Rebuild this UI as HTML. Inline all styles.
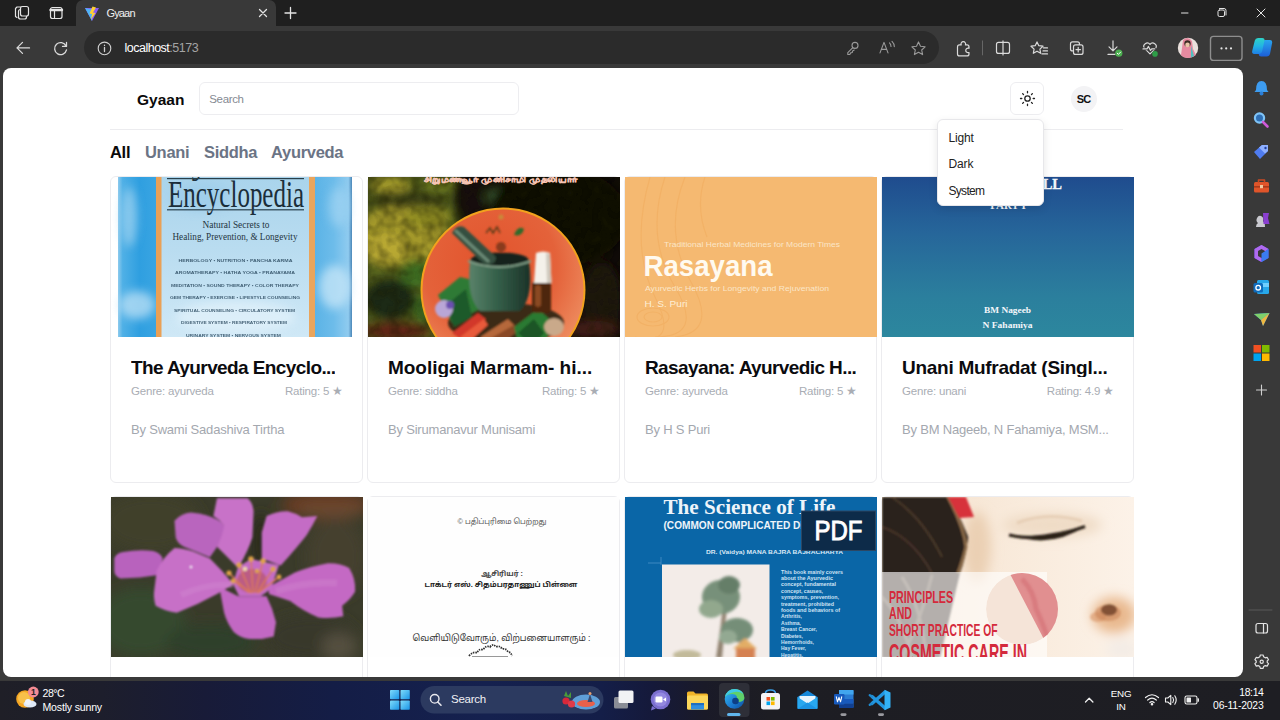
<!DOCTYPE html>
<html lang="en">
<head>
<meta charset="utf-8">
<title>Gyaan</title>
<style>
*{box-sizing:border-box;margin:0;padding:0}
html,body{width:1280px;height:720px;overflow:hidden;background:#1f1f1f;font-family:"Liberation Sans",sans-serif}
.abs{position:absolute}
#root{position:relative;width:1280px;height:720px;overflow:hidden;background:#393939}
/* ---------- browser chrome ---------- */
#tabstrip{left:0;top:0;width:1280px;height:26.300px;background:#1f1f1f}
#tab{left:76px;top:0;width:200px;height:27px;background:#393939;border-radius:7px 7px 0 0}
#tabtitle{left:106.500px;top:7px;font-size:11px;color:#f0f0f0;letter-spacing:-.85px}
#toolbar{left:0;top:26px;width:1280px;height:43px;background:#393939}
#addr{left:84px;top:30.500px;width:855px;height:33.500px;border-radius:17px;background:#2b2b2b}
#url{left:124.500px;top:41px;font-size:12.500px;color:#fff;letter-spacing:-.5px}
#url span{color:#a4a4a4}
#sidebar{left:1243px;top:68px;width:37px;height:612px;background:#393939}
/* ---------- page ---------- */
#page{left:3px;top:68.400px;width:1240px;height:609px;background:#fff;border-radius:8px;overflow:hidden}
#page .in{position:absolute;left:-3px;top:-68.400px;width:1280px;height:720px}
#brand{left:137px;top:91.400px;font-size:15.500px;font-weight:700;color:#0a0a0a;letter-spacing:0}
#search{left:199px;top:82px;width:320px;height:33px;border:1px solid #ededf0;border-radius:6px}
#search span{position:absolute;left:9.300px;top:9.500px;font-size:11.500px;color:#858a92;letter-spacing:-.35px}
#hr{left:110px;top:129px;width:1013px;height:1px;background:#ececef}
#themebtn{left:1010px;top:82px;width:34px;height:33px;border:1px solid #ededf0;border-radius:6px;background:#fff}
#avatar{left:1071px;top:86px;width:26px;height:26px;border-radius:13px;background:#f3f3f5;font-size:11px;font-weight:700;color:#111;text-align:center;line-height:26px;letter-spacing:-1px;text-indent:-1px}
.tabs{top:143px;font-size:16.5px;font-weight:700;color:#6b7485;letter-spacing:-.3px}
#menu{left:937px;top:118.500px;width:107px;height:87.700px;background:#fff;border:1px solid #e7e7ea;border-radius:6px;box-shadow:0 3px 8px rgba(0,0,0,.10)}
#menu div{position:absolute;left:10.500px;font-size:12px;color:#222;letter-spacing:-.15px}
/* ---------- cards ---------- */
.card{width:253px;height:307px;border:1px solid #ececef;border-radius:6px;background:#fff}
.card .img{position:absolute;left:0;top:0;width:252px;height:160px;overflow:hidden}
.card .img svg{position:absolute;left:0;top:0}
.card h3{position:absolute;left:20px;top:180px;height:19.500px;line-height:21.800px;overflow:hidden;font-size:19px;font-weight:700;color:#0b0b0f;white-space:nowrap;letter-spacing:-.6px}
.card .g{position:absolute;left:20px;top:207.300px;line-height:14px;font-size:11.5px;color:#a9adb4;letter-spacing:-.2px}
.card .r{position:absolute;right:19px;top:207.300px;line-height:14px;font-size:11.5px;color:#a9adb4;letter-spacing:-.2px}
.card .by{position:absolute;left:20px;top:245px;font-size:13px;color:#a4a8af;white-space:nowrap;letter-spacing:-.2px}
/* ---------- taskbar ---------- */
#taskbar{left:0;top:680.500px;width:1280px;height:40px;background:linear-gradient(90deg,#1f1f27 0%,#1d1e2c 8%,#181b38 16%,#141d46 26%,#15214f 38%,#141e48 47%,#15193a 51%,#1a1a28 55%,#1d1d23 60%,#1e1e23 100%)}
#gap{left:0;top:677px;width:1280px;height:4px;background:#393939}
.tb{color:#fff;font-size:11.5px;letter-spacing:-.2px}
</style>
</head>
<body>
<div id="root">
  <div class="abs" id="tabstrip"></div>
  <div class="abs" id="tab"></div>
  <div class="abs" id="tabtitle">Gyaan</div>
  <div class="abs" id="toolbar"></div>
  <div class="abs" id="addr"></div>
  <div class="abs" id="url">localhost<span>:5173</span></div>
  <!--CHROME-ICONS--><svg class="abs" style="left:0;top:0" width="1280" height="70" viewBox="0 0 1280 70" fill="none" stroke="#e4e4e4" stroke-width="1.200" stroke-linecap="round" stroke-linejoin="round">
<!-- workspaces -->
<rect x="18.500" y="9.500" width="8" height="9.500" rx="2" /><path d="M17 17.500 l-1.500 -1 v-8 l1.500 -1.500 h6"/><rect x="20.500" y="6.500" width="8" height="9.500" rx="2" fill="#1f1f1f"/>
<!-- tab actions -->
<rect x="50.500" y="7.500" width="11.500" height="11" rx="2"/><path d="M50.500 10 h11.500" stroke-width="2.400"/><path d="M54.500 11 v7.500"/>
<!-- vite favicon -->
<g stroke="none" transform="translate(0 1.500)"><path d="M85 6.500 L99 6.500 L92 19.500 Z" fill="#8a5cf6"/><path d="M85 6.500 L92 8 L92 19.500 Z" fill="#4fb4f7"/><path d="M92.500 5 L96 6 L93 11 L95.500 11.500 L91 18 L92 12.500 L89.500 12 Z" fill="#ffcf33"/></g>
<!-- tab close, new tab -->
<path d="M259.500 9.500 l7 7 M266.500 9.500 l-7 7" stroke-width="1.300"/>
<path d="M290.500 7.500 v11 M285 13 h11" stroke-width="1.300"/>
<!-- window controls -->
<path d="M1181.500 13 h6.500" stroke-width="1"/>
<rect x="1218" y="10" width="6.500" height="6.500" rx="1.500" stroke-width="1"/><path d="M1219.500 8.500 h4.500 q2 0 2 2 v4.500" stroke-width="1"/>
<path d="M1257 9 l8 8 M1265 9 l-8 8" stroke-width="1"/>
<g transform="translate(0 0.900)" stroke="#dadada"><!-- back, refresh -->
<path d="M17 47 h12.500 M22.500 41.500 l-5.500 5.500 l5.500 5.500" stroke-width="1.300"/>
<path d="M66 45 a6 6 0 1 0 .5 4 M66.500 41.500 v4 h-4" stroke-width="1.300"/>
<!-- info -->
<circle cx="104.500" cy="47.500" r="6.300" stroke="#d0d0d0" stroke-width="1.100"/><path d="M104.500 46.500 v4.200 M104.500 44.200 v.3" stroke="#d0d0d0" stroke-width="1.300"/>
<!-- key, read aloud, star (dim) -->
<g stroke="#9a9a9a" stroke-width="1.100" transform="translate(0.500 0)"><circle cx="854.500" cy="44.500" r="3"/><path d="M852.300 46.800 l-5 5 v1.800 h2 l.8 -1.600 l1.600 -.4 l.4 -1.600 l1.600 -.8"/>
<path d="M879.500 52 l4 -10.500 l4 10.500 M881 48.500 h5 M889 42 q1.500 1.500 1.500 3.500 M891.500 40.500 q2.300 2.200 2.300 5.200"/>
<path d="M918 41 l2 4.300 l4.600 .6 l-3.400 3.200 l.9 4.600 l-4.100 -2.300 l-4.100 2.300 l.9 -4.600 l-3.400 -3.200 l4.600 -.6 z"/></g>
<!-- extensions -->
<path d="M957.500 46 q0 -2 2 -2 h1.700 a2.300 2.300 0 1 1 4.200 0 h1.600 q2 0 2 2 v1.400 a2.300 2.300 0 1 0 0 4.200 v1.400 q0 2 -2 2 h-7.500 q-2 0 -2 -2 z"/>
<path d="M982.500 40 v14" stroke="#666" stroke-width="1"/>
<!-- split screen -->
<rect x="996.500" y="41.500" width="13" height="11" rx="2"/><path d="M1003 40 v14"/>
<!-- favorites -->
<path d="M1037 41 l1.800 3.800 l4.200 .5 l-3.100 2.900 l.8 4.200 l-3.700 -2.100 l-3.700 2.100 l.8 -4.200 l-3.100 -2.900 l4.200 -.5 z M1043.500 47 h4 M1043 50 h4.500 M1042 53 h5.500"/>
<!-- collections -->
<rect x="1070.500" y="41" width="9" height="9" rx="2"/><rect x="1073.500" y="44" width="9.500" height="9.500" rx="2" fill="#393939"/><path d="M1078.200 46.500 v4.500 M1076 48.700 h4.500"/>
<!-- downloads -->
<path d="M1113 40 v9.500 M1109 46 l4 4 l4 -4 M1108 53.500 h7"/><circle cx="1118.800" cy="52.300" r="3.600" fill="#4caf50" stroke="none"/><path d="M1117.200 52.300 l1.200 1.200 l2.200 -2.300" stroke="#fff" stroke-width="1"/>
<!-- performance heart -->
<path d="M1150 53 l-5.500 -5.500 a3.300 3.300 0 0 1 5.500 -4 a3.300 3.300 0 0 1 5.500 4 z"/><path d="M1143 48 h4 l1.500 -2.500 l2 4 l1.200 -1.500 h3" stroke="#393939" stroke-width="2.600"/><path d="M1143 48 h4 l1.500 -2.500 l2 4 l1.200 -1.500 h3"/><circle cx="1155" cy="53" r="2.800" fill="#2e9d48" stroke="none"/>
<!-- profile avatar -->
<g stroke="none"><circle cx="1188" cy="47" r="10.200" fill="#e9e0dc"/><path d="M1183 39 q5 -4 9 1 l1 8 l3 6 q-4 3.500 -8 3.200 q-5 -.5 -7 -3.200 l1 -7z" fill="#e58aa0"/><circle cx="1187.500" cy="42.500" r="3.200" fill="#3a2a22"/><circle cx="1187.500" cy="44" r="2.300" fill="#e8c4a8"/><path d="M1191 45 l3 10 l-3 1.500z" fill="#4fc0c0"/></g>
<!-- more button -->
<rect x="1210.500" y="35.500" width="31.500" height="24" rx="3" stroke="#8e8e8e" stroke-width="1.400"/><g fill="#e4e4e4" stroke="none"><circle cx="1221.500" cy="47.500" r="1.100"/><circle cx="1226.200" cy="47.500" r="1.100"/><circle cx="1231" cy="47.500" r="1.100"/></g>
<!-- copilot -->
<defs><linearGradient id="cpa" x1="0" y1="0" x2="0" y2="1"><stop offset="0" stop-color="#2fd3c6"/><stop offset=".5" stop-color="#22b5e2"/><stop offset="1" stop-color="#1f7fe6"/></linearGradient><linearGradient id="cpb" x1="0" y1="0" x2="0" y2="1"><stop offset="0" stop-color="#2aa5ee"/><stop offset="1" stop-color="#1c5fd8"/></linearGradient></defs>
<g stroke="none"><path d="M1261.500 41.500 q.6 -2.500 3.200 -2.500 h5 q3 0 2.400 3 l-2 10.500 q-.6 3 -3.600 3 h-5.500 q-2.700 0 -2 -2.800z" fill="url(#cpb)"/><path d="M1254.800 39.500 q.6 -2.500 3.200 -2.500 h4.200 q2.800 0 2.200 2.800 l-2.200 10.400 q-.6 2.800 -3.400 2.800 h-4.600 q-2.700 0 -2 -2.800z" fill="url(#cpa)"/></g>
</g></svg><!--/CHROME-ICONS-->
  <div class="abs" id="sidebar"></div>
  <!--SIDEBAR-ICONS--><svg class="abs" style="left:1243px;top:68px" width="37" height="612" viewBox="1243 68 37 612" fill="none" stroke-linecap="round" stroke-linejoin="round">
<!-- bell -->
<path d="M1256 90 q0 -9 5.500 -9 q5.500 0 5.500 9 l1.500 2 h-14z" fill="#3d9cf0"/><circle cx="1261.500" cy="93.500" r="2" fill="#2b7fd8"/>
<!-- search -->
<circle cx="1259.500" cy="118" r="4.600" stroke="#7fc4f8" stroke-width="2.200" fill="#2f6fb5"/><path d="M1263 122 l4.500 4.500" stroke="#d05ad8" stroke-width="2.600"/>
<!-- tag -->
<path d="M1254 152 l8 -7 h6 v6 l-8 8z" fill="#4f7cf0"/><path d="M1262 145 h6 v6 l-3 2.500 l-6 -6z" fill="#8fb0ff"/><circle cx="1265.500" cy="148" r="1.200" fill="#1f3f9f"/>
<!-- toolbox -->
<rect x="1254" y="182" width="15" height="10.500" rx="1.500" fill="#e0552a"/><path d="M1258.500 182 v-2 h6 v2" stroke="#c84a24" stroke-width="1.600"/><rect x="1254" y="186" width="15" height="1.600" fill="#a83a1c"/><rect x="1260" y="185" width="3" height="3.200" fill="#f0c9a0"/>
<!-- chess -->
<path d="M1256 227 q0 -3 2 -4 q-2.500 -2 -1 -5 q1.500 -3 4 -2 q3 1 2 5 q2 2 2 6z" fill="#c9c9cf"/><path d="M1263 213 h6 l-1 5 l1.500 6 h-6z" fill="#8a3fd0"/>
<!-- m365 -->
<path d="M1261.500 245 l7 4 v9 l-7 4 l-7 -4 v-9z" fill="#6a4fe8"/><path d="M1261.500 245 l7 4 l-7 4.500 v8.500 l-7 -4 v-9z" fill="#b06af0"/><path d="M1258 251 l3.500 -2 l3.500 2 v5 l-3.500 2 l-3.500 -2z" fill="#393939"/><path d="M1261.500 253.500 l7 -4.500 v9 l-7 4z" fill="#3a7cf0"/>
<!-- outlook -->
<rect x="1257" y="280" width="12" height="14" rx="1.500" fill="#28a8ea"/><rect x="1261" y="283" width="8" height="4" fill="#6fd0ff"/><rect x="1253.500" y="283" width="9.500" height="9.500" rx="1.500" fill="#0f6cbd"/><circle cx="1258.200" cy="287.700" r="2.300" stroke="#fff" stroke-width="1.300"/>
<!-- paper plane -->
<path d="M1254 314 l15.500 -1 l-6.500 13 l-2 -6z" fill="#3a9be8"/><path d="M1254 314 l15.500 -1 l-8.500 7z" fill="#7fd06a"/><path d="M1261 320 l8.500 -7 l-6.500 13z" fill="#f0b840"/>
<!-- ms squares -->
<rect x="1253.500" y="345" width="7.500" height="7.500" fill="#f25022"/><rect x="1262" y="345" width="7.500" height="7.500" fill="#7fba00"/><rect x="1253.500" y="353.500" width="7.500" height="7.500" fill="#00a4ef"/><rect x="1262" y="353.500" width="7.500" height="7.500" fill="#ffb900"/>
<!-- plus -->
<path d="M1261.500 385 v10 M1256.500 390 h10" stroke="#d0d0d0" stroke-width="1.100"/>
<!-- divider, panel toggle, gear -->
<path d="M1249 610 h23" stroke="#5a5a5a" stroke-width="1"/>
<rect x="1256" y="623.500" width="11.500" height="9.500" rx="2" stroke="#e4e4e4" stroke-width="1.200"/><path d="M1263.500 623.500 v9.500" stroke="#e4e4e4" stroke-width="1.200"/>
<g stroke="#e4e4e4" stroke-width="1.200"><circle cx="1261.700" cy="661.700" r="1.600"/><path d="M1260.300 655 h2.800 l.5 1.800 l1.700 1 l1.800 -.5 l1.400 2.400 l-1.300 1.300 v1.400 l1.300 1.300 l-1.400 2.400 l-1.800 -.5 l-1.700 1 l-.5 1.800 h-2.800 l-.5 -1.800 l-1.700 -1 l-1.800 .5 l-1.400 -2.400 l1.300 -1.300 v-1.400 l-1.300 -1.300 l1.400 -2.400 l1.800 .5 l1.700 -1z"/></g>
</svg><!--/SIDEBAR-ICONS-->
  <div class="abs" id="gap"></div>
  <div class="abs" id="page"><div class="in">
    <div class="abs" id="brand">Gyaan</div>
    <div class="abs" id="search"><span>Search</span></div>
    <div class="abs" id="themebtn"><svg class="abs" style="left:8px;top:7px" width="17" height="17" viewBox="0 0 17 17" fill="none" stroke="#222" stroke-width="1.300" stroke-linecap="round"><circle cx="8.500" cy="8.500" r="2.700"/><path d="M8.500 1.500v1.300M8.500 14.200v1.300M1.500 8.500h1.300M14.200 8.500h1.300M3.600 3.600l.9.900M12.500 12.500l.9.900M3.600 13.400l.9-.9M12.500 4.500l.9-.9"/></svg></div>
    <div class="abs" id="avatar">SC</div>
    <div class="abs" id="hr"></div>
    <div class="abs tabs" style="left:110px;color:#0a0a0a">All</div>
    <div class="abs tabs" style="left:145px">Unani</div>
    <div class="abs tabs" style="left:204px">Siddha</div>
    <div class="abs tabs" style="left:271px">Ayurveda</div>

    <div class="abs card" style="left:110px;top:176px">
      <div class="img" id="im1"><svg width="251" height="160" viewBox="0 0 251 160">
<defs>
<linearGradient id="s1" x1="0" x2="1" y1="0" y2="0"><stop offset="0" stop-color="#8ecbee"/><stop offset=".12" stop-color="#4fb0e6"/><stop offset=".55" stop-color="#2f9fe0"/><stop offset="1" stop-color="#3aa5e2"/></linearGradient>
<linearGradient id="s1r" x1="0" x2="1" y1="0" y2="0"><stop offset="0" stop-color="#5bb3e6"/><stop offset=".5" stop-color="#6dbcea"/><stop offset=".9" stop-color="#8fcbef"/><stop offset="1" stop-color="#4a86b8"/></linearGradient>
<linearGradient id="s1c" x1="0" x2="0" y1="0" y2="1"><stop offset="0" stop-color="#a9d4ec"/><stop offset=".45" stop-color="#b9dcf0"/><stop offset="1" stop-color="#cfe8f6"/></linearGradient>
<filter id="b1" x="-30%" y="-30%" width="160%" height="160%"><feGaussianBlur stdDeviation="5"/></filter>
</defs>
<rect x="7" y="0" width="39" height="160" fill="url(#s1)"/>
<rect x="204" y="0" width="37" height="160" fill="url(#s1r)"/>
<rect x="50" y="0" width="149" height="160" fill="url(#s1c)"/>
<g filter="url(#b1)" opacity=".75"><ellipse cx="26" cy="128" rx="18" ry="14" fill="#bfe2f6"/><ellipse cx="18" cy="40" rx="8" ry="30" fill="#9dd2f0"/><ellipse cx="224" cy="110" rx="16" ry="22" fill="#c9e7f8"/><ellipse cx="228" cy="30" rx="10" ry="20" fill="#9fd3f2"/><ellipse cx="125" cy="140" rx="60" ry="16" fill="#e2f2fb"/><ellipse cx="90" cy="20" rx="30" ry="14" fill="#9cccea"/></g>
<rect x="45" y="0" width="5.5" height="160" fill="#eaa055"/>
<rect x="198" y="0" width="6" height="160" fill="#eaa55c"/>
<g font-family="'Liberation Serif',serif" fill="#1f3440" text-anchor="middle">
<text x="125" y="-3" font-size="34" textLength="132" lengthAdjust="spacingAndGlyphs">Ayurveda</text>
<rect x="56" y="1" width="137" height="1.2" fill="#28404c"/>
<text x="125" y="29.6" font-size="38" textLength="136" lengthAdjust="spacingAndGlyphs" fill="#1b2e3a">Encyclopedia</text>
<rect x="56" y="32.2" width="137" height="1.2" fill="#28404c"/>
<text x="125" y="50.5" font-size="10.5" textLength="67" lengthAdjust="spacingAndGlyphs">Natural Secrets to</text>
<text x="124" y="63.2" font-size="10.5" textLength="125" lengthAdjust="spacingAndGlyphs">Healing, Prevention, &amp; Longevity</text>
</g>
<g font-family="'Liberation Sans',sans-serif" font-size="4.2" font-weight="700" fill="#2b4a60" text-anchor="middle" opacity=".85">
<text x="124.5" y="84.5" textLength="114" lengthAdjust="spacingAndGlyphs">HERBOLOGY • NUTRITION • PANCHA KARMA</text>
<text x="124" y="97" textLength="120" lengthAdjust="spacingAndGlyphs">AROMATHERAPY • HATHA YOGA • PRANAYAMA</text>
<text x="124" y="109.5" textLength="128" lengthAdjust="spacingAndGlyphs">MEDITATION • SOUND THERAPY • COLOR THERAPY</text>
<text x="124" y="122" textLength="130" lengthAdjust="spacingAndGlyphs">GEM THERAPY • EXERCISE • LIFESTYLE COUNSELING</text>
<text x="123.5" y="134.5" textLength="121" lengthAdjust="spacingAndGlyphs">SPIRITUAL COUNSELING • CIRCULATORY SYSTEM</text>
<text x="123" y="147" textLength="106" lengthAdjust="spacingAndGlyphs">DIGESTIVE SYSTEM • RESPIRATORY SYSTEM</text>
<text x="122.5" y="159.5" textLength="95" lengthAdjust="spacingAndGlyphs">URINARY SYSTEM • NERVOUS SYSTEM</text>
</g>
</svg></div>
      <h3>The Ayurveda Encyclo...</h3><div class="g">Genre: ayurveda</div><div class="r">Rating: 5 ★</div><div class="by">By Swami Sadashiva Tirtha</div>
    </div>
    <div class="abs card" style="left:367px;top:176px">
      <div class="img" id="im2"><svg width="252" height="160" viewBox="0 0 252 160">
<defs>
<filter id="b2" x="-30%" y="-30%" width="160%" height="160%"><feGaussianBlur stdDeviation="4"/></filter>
<filter id="b2s" x="-30%" y="-30%" width="160%" height="160%"><feGaussianBlur stdDeviation="1.2"/></filter>
<filter id="n2" x="0" y="0" width="100%" height="100%"><feTurbulence type="fractalNoise" baseFrequency=".09" numOctaves="2" seed="4"/><feColorMatrix values="0 0 0 0 0  0 0 0 0 0  0 0 0 0 0  0 0 0 -1.6 1.05"/><feComposite in="SourceGraphic" operator="in"/></filter>
<radialGradient id="c2" cx=".42" cy=".35" r=".75"><stop offset="0" stop-color="#e2532c"/><stop offset=".55" stop-color="#e4623a"/><stop offset="1" stop-color="#f19a6c"/></radialGradient>
<linearGradient id="m2" x1="0" x2="1"><stop offset="0" stop-color="#5a826a"/><stop offset=".45" stop-color="#35604a"/><stop offset="1" stop-color="#1c3328"/></linearGradient>
<clipPath id="cc2"><circle cx="135" cy="113" r="81"/></clipPath>
</defs>
<rect width="252" height="160" fill="#0f0a07"/>
<g filter="url(#b2)">
<rect x="-5" y="-5" width="95" height="170" fill="#55621c"/>
<ellipse cx="34" cy="58" rx="44" ry="30" fill="#a3982a"/>
<ellipse cx="18" cy="72" rx="20" ry="16" fill="#b8a830"/>
<ellipse cx="60" cy="40" rx="22" ry="10" fill="#8f8c24"/>
<ellipse cx="40" cy="22" rx="40" ry="9" fill="#3a3f18"/>
<ellipse cx="22" cy="8" rx="20" ry="7" fill="#a39a2a"/>
<ellipse cx="70" cy="8" rx="16" ry="6" fill="#6d7a1e"/>
<ellipse cx="22" cy="122" rx="26" ry="22" fill="#1b2a14"/>
<ellipse cx="50" cy="96" rx="18" ry="14" fill="#3f6f22"/>
<ellipse cx="56" cy="132" rx="10" ry="14" fill="#3a6a20"/>
<ellipse cx="28" cy="154" rx="36" ry="9" fill="#5e2416"/>
<ellipse cx="100" cy="20" rx="16" ry="28" fill="#15110a"/>
<ellipse cx="128" cy="20" rx="12" ry="10" fill="#34502a"/>
<ellipse cx="190" cy="40" rx="70" ry="50" fill="#0b0705"/>
<ellipse cx="234" cy="125" rx="20" ry="40" fill="#1d120b"/>
<ellipse cx="222" cy="152" rx="30" ry="9" fill="#3f1e12"/>
</g>
<rect width="252" height="160" fill="#1a1a08" filter="url(#n2)" opacity=".55"/>
<circle cx="135" cy="113" r="82.5" fill="#f2a21d"/>
<circle cx="135" cy="113" r="80.5" fill="url(#c2)"/>
<g clip-path="url(#cc2)">
<g filter="url(#b2s)">
<ellipse cx="138" cy="146" rx="58" ry="20" fill="#3b2a18"/>
<path d="M70 118 L92 100 L110 104 L112 132 L84 146 Z" fill="#2f7a35"/>
<path d="M78 128 L98 112 L104 140 L86 150 Z" fill="#1f5a2a"/>
<ellipse cx="76" cy="132" rx="9" ry="9" fill="#b9a6d6"/>
<ellipse cx="82" cy="128" rx="4" ry="4" fill="#6a4fb0"/>
<path d="M84 156 L110 136 L118 142 L96 164 Z" fill="#d2382a"/>
<path d="M92 160 L116 142 L120 148 L100 166 Z" fill="#e85a3a"/>
<path d="M112 160 L140 142 L148 150 L124 168 Z" fill="#b5683a"/>
<path d="M118 164 L146 148 L150 154 L130 170 Z" fill="#8a4a26"/>
<path d="M146 150 L170 132 L186 146 L176 166 L150 166 Z" fill="#2c7a33"/>
<path d="M150 156 L166 142 L176 156 L164 168 Z" fill="#1d5526"/>
<ellipse cx="186" cy="150" rx="10" ry="9" fill="#c9a98a"/>
<!-- bottle -->
<rect x="164" y="104" width="19" height="32" rx="4" fill="#4e2610"/>
<rect x="167" y="108" width="6" height="22" rx="3" fill="#8a4a22"/>
<path d="M168 76 Q175 73 182 76 L183.500 106 L166 106 Z" fill="#f4f1ea"/>
<path d="M178 76 L182 77 L183.500 106 L179 106 Z" fill="#cfc9bd"/>
<!-- mortar -->
<path d="M102 84 Q104 76 132 76 Q160 76 161 84 Q166 120 152 134 L112 134 Q98 120 102 84 Z" fill="url(#m2)"/>
<ellipse cx="131.5" cy="83" rx="29" ry="7.5" fill="#15241c"/>
<path d="M100 84 Q131 96 163 84" stroke="#7e9c85" stroke-width="2.2" fill="none"/>
<!-- pestle -->
<path d="M84 56 Q88 47 96 50 L128 80 Q128 88 117 88 Z" fill="#34503f"/>
<path d="M88 54 L120 84" stroke="#6d8c78" stroke-width="3" stroke-linecap="round"/>
<!-- top motif -->
<circle cx="133" cy="70" r="5" fill="#8a3a1c"/>
<path d="M118 56 l4 -5 l3 5 l4 -6 l3 6" stroke="#5a3a18" stroke-width="1.5" fill="none"/>
<path d="M146 58 q4 -10 10 -6 q-2 8 -10 6z" fill="#2f6a2a"/>
<circle cx="133" cy="40" r="2.5" fill="#c98a3a"/>
</g>
</g>
<g font-family="'Liberation Sans',sans-serif" font-weight="700" font-size="9" fill="#f6c4b4" stroke="#f6c4b4" stroke-width=".4" text-anchor="middle"><text x="133" y="5" textLength="154" lengthAdjust="spacingAndGlyphs">சிறுமணவூர் முனிசாமி முதலியார்</text></g>
</svg></div>
      <h3 style="letter-spacing:-.03px">Mooligai Marmam- hi...</h3><div class="g">Genre: siddha</div><div class="r">Rating: 5 ★</div><div class="by">By Sirumanavur Munisami</div>
    </div>
    <div class="abs card" style="left:624px;top:176px">
      <div class="img" id="im3"><svg width="252" height="160" viewBox="0 0 252 160">
<rect width="252" height="160" fill="#f5b971"/>
<g fill="none" stroke="#f2b064" stroke-width="1.2" opacity=".8"><path d="M40 0 Q20 60 50 110 T30 160"/><path d="M60 0 Q38 55 66 105 T50 160"/><path d="M25 0 Q5 70 30 120 T10 160"/><path d="M80 0 Q70 30 82 60"/><ellipse cx="28" cy="140" rx="16" ry="9"/><ellipse cx="28" cy="140" rx="9" ry="5"/></g>
<g font-family="'Liberation Sans',sans-serif" fill="#fdf3e3">
<text x="39" y="69.5" font-size="7.6" textLength="176" lengthAdjust="spacingAndGlyphs" fill="#fbe6c8">Traditional Herbal Medicines for Modern Times</text>
<text x="18.5" y="99.2" font-size="29.5" font-weight="700" textLength="129" lengthAdjust="spacingAndGlyphs" fill="#fffaf0">Rasayana</text>
<text x="20" y="114" font-size="7.6" textLength="184" lengthAdjust="spacingAndGlyphs" fill="#fbe6c8">Ayurvedic Herbs for Longevity and Rejuvenation</text>
<text x="19.5" y="129.5" font-size="9.5" textLength="43" lengthAdjust="spacingAndGlyphs" fill="#fdeed6">H. S. Puri</text>
</g>
</svg></div>
      <h3>Rasayana: Ayurvedic H...</h3><div class="g">Genre: ayurveda</div><div class="r">Rating: 5 ★</div><div class="by">By H S Puri</div>
    </div>
    <div class="abs card" style="left:881px;top:176px">
      <div class="img" id="im4"><svg width="252" height="160" viewBox="0 0 252 160">
<defs><linearGradient id="g4" x1="0" x2="0" y1="0" y2="1"><stop offset="0" stop-color="#1f4c8e"/><stop offset=".35" stop-color="#26669a"/><stop offset=".75" stop-color="#2b7f9d"/><stop offset="1" stop-color="#2c879e"/></linearGradient></defs>
<rect width="252" height="160" fill="url(#g4)"/>
<g font-family="'Liberation Serif',serif" font-weight="700" fill="#f3f6fa" text-anchor="middle">
<text x="180" y="12" font-size="14.500" text-anchor="end" stroke="#f3f6fa" stroke-width=".3">ALL</text>
<text x="126" y="31.500" font-size="11">PART I</text>
<text x="125.500" y="136.300" font-size="8.600" textLength="47" lengthAdjust="spacingAndGlyphs">BM Nageeb</text>
<text x="125.500" y="151" font-size="8.600" textLength="50" lengthAdjust="spacingAndGlyphs">N Fahamiya</text>
</g>
</svg></div>
      <h3 style="letter-spacing:-.28px">Unani Mufradat (Singl...</h3><div class="g">Genre: unani</div><div class="r">Rating: 4.9 ★</div><div class="by">By BM Nageeb, N Fahamiya, MSM...</div>
    </div>

    <div class="abs card" style="left:110px;top:496px">
      <div class="img" id="im5"><svg width="253" height="161" viewBox="0 0 253 161">
<defs>
<filter id="b5" x="-30%" y="-30%" width="160%" height="160%"><feGaussianBlur stdDeviation="7"/></filter>
<filter id="b5s" x="-10%" y="-10%" width="120%" height="120%"><feGaussianBlur stdDeviation=".9"/></filter>
<radialGradient id="pt5" cx=".5" cy=".5" r=".6"><stop offset="0" stop-color="#cf82cf"/><stop offset="1" stop-color="#c066c2"/></radialGradient>
</defs>
<rect width="253" height="161" fill="#3a3b2a"/>
<g filter="url(#b5)">
<ellipse cx="40" cy="25" rx="50" ry="30" fill="#403f2c"/>
<ellipse cx="215" cy="8" rx="45" ry="14" fill="#6b3a22"/>
<ellipse cx="225" cy="60" rx="30" ry="40" fill="#45402f"/>
<ellipse cx="30" cy="125" rx="45" ry="35" fill="#34482f"/>
<ellipse cx="100" cy="145" rx="45" ry="18" fill="#2f412c"/>
<ellipse cx="200" cy="140" rx="45" ry="22" fill="#38382a"/>
<ellipse cx="228" cy="150" rx="18" ry="14" fill="#55503f"/>
<ellipse cx="150" cy="45" rx="10" ry="30" fill="#2b2a1c"/>
<rect x="190" y="10" width="60" height="5" fill="#6a5a40"/>
</g>
<g filter="url(#b5s)">
<path d="M3.300 61.500 Q5 56 12 55 Q28 52 42.200 53.900 Q50 56 51.700 61.500 L46.900 78 Q30 81 9.200 81.500 Q3 79 3.300 73.300 Z" fill="#b862bd"/>
<path d="M63.500 23.700 Q70 16 80 15.400 Q96 17 106 22.500 Q114 27 115.400 33.100 Q112 42 98.900 60.300 L72.900 49.700 Q66 46 64.700 40.200 Z" fill="#b965be"/>
<path d="M106 1.300 L136.700 1.300 Q142 6 142.600 14.300 L141.400 40.200 Q138 52 127.200 70.900 L113.100 56.800 L106 49.700 Q112 38 113.100 28.400 Q108 22 102.400 19 Z" fill="#c872c8"/>
<path d="M155.600 19 Q166 14 176.800 14.300 Q184 16 191 20.200 L206.300 19 Q202 28 195.700 37.900 Q188 48 169.700 68.600 L150.800 61.500 L150.800 35.500 Z" fill="#c46cc5"/>
<path d="M157.900 89.800 L183.900 75.600 Q200 69 217 66.200 Q230 66 238.200 70.900 Q245 82 244.100 94.500 Q240 102 231.100 108.700 L232.300 119.300 Q220 122 207.500 120.500 Q192 114 179.200 104 L157.900 96.900 Z" fill="#c469c4"/>
<path d="M108.300 89.800 L127.200 99.300 L155.600 99.300 Q162 112 165 125.200 L162.700 139.400 Q150 143 136.700 141.800 Q128 140 122.500 134.700 Q116 126 113.100 115.800 Z" fill="#c268c3"/>
<path d="M45.800 73.300 Q52 60 63.500 50.900 Q72 51 82.400 54.400 L98.900 61.500 Q112 74 122.500 87.500 L106 96.900 Q86 108 65.800 115.800 Q54 114 44.600 108.700 Q42 100 43.400 92.200 Z" fill="#c76fc7"/>
<path d="M70 98 Q95 86 122 88" stroke="#d48fd3" stroke-width="6" fill="none" opacity=".35"/>
<path d="M165 94 Q195 84 226 86" stroke="#d48fd2" stroke-width="7" fill="none" opacity=".3"/>
<path d="M122 87 L127 70 L140 62 L168 68 L160 92 L150 99 L128 99 Z" fill="#c46cc5"/><ellipse cx="141" cy="84" rx="15" ry="12" fill="#b8566a" opacity=".7"/>
<g stroke="#d9785a" stroke-width="1.600"><path d="M138 96 L118 76"/><path d="M140 96 L128 68"/><path d="M142 96 L140 62"/><path d="M144 96 L152 64"/><path d="M146 96 L162 72"/><path d="M147 96 L168 80"/><path d="M141 96 L122 84"/></g>
<g fill="#e0a348"><circle cx="118" cy="76" r="2.600"/><circle cx="128" cy="68" r="2.800"/><circle cx="140" cy="62" r="2.800"/><circle cx="152" cy="64" r="2.800"/><circle cx="162" cy="72" r="2.600"/><circle cx="168" cy="80" r="2.400"/><circle cx="122" cy="84" r="2.400"/><circle cx="134" cy="72" r="2.200" fill="#f0d9a8"/><circle cx="146" cy="74" r="2.200"/></g>
<circle cx="80" cy="70" r="1.300" fill="#f3e6f5"/>
</g>
</svg></div>
    </div>
    <div class="abs card" style="left:367px;top:496px">
      <div class="img" id="im6"><svg width="251" height="161" viewBox="0 0 251 161">
<rect width="251" height="161" fill="#fefefe"/>
<g font-family="'Liberation Sans','Noto Sans Tamil','DejaVu Sans',sans-serif" fill="#2a2a2a" text-anchor="middle">
<text x="134" y="26.500" font-size="7.500" textLength="89" lengthAdjust="spacingAndGlyphs" fill="#555">© பதிப்புரிமை பெற்றது</text>
<text x="134" y="78.500" font-size="7" font-weight="700" textLength="42" lengthAdjust="spacingAndGlyphs" fill="#444">ஆசிரியர் :</text>
<text x="133" y="90" font-size="7.500" font-weight="700" textLength="153" lengthAdjust="spacingAndGlyphs" fill="#222">டாக்டர் எஸ். சிதம்பரதாணுப் பிள்ளை</text>
<text x="133.500" y="144" font-size="9.500" textLength="178" lengthAdjust="spacingAndGlyphs" fill="#333">வெளியிடுவோரும், விற்பனையாளரும் :</text>
</g>
<path d="M101 159 q4 -5 8 -3 q2 -5 6 -3 q3 -5 7 -3 q3 -4 6 0 q4 -2 6 2 q4 -1 6 3 q3 0 4 4" stroke="#333" stroke-width="1.800" fill="none" stroke-dasharray="1.5 1"/>
<path d="M104 160 h36" stroke="#333" stroke-width="1.200"/>
</svg></div>
    </div>
    <div class="abs card" style="left:624px;top:496px">
      <div class="img" id="im7"><svg width="252" height="161" viewBox="0 0 252 161">
<defs><filter id="b7" x="-30%" y="-30%" width="160%" height="160%"><feGaussianBlur stdDeviation="1.600"/></filter></defs>
<rect width="252" height="161" fill="#0a66a7"/>
<g fill="#eef4fa">
<text x="38.500" y="17" font-family="'Liberation Serif',serif" font-weight="700" font-size="21.500" textLength="172" lengthAdjust="spacingAndGlyphs">The Science of Life</text>
<text x="38.500" y="32.300" font-family="'Liberation Sans',sans-serif" font-weight="700" font-size="10" textLength="184" lengthAdjust="spacingAndGlyphs">(COMMON COMPLICATED DISEASES)</text>
<text x="81" y="56.500" font-family="'Liberation Sans',sans-serif" font-weight="700" font-size="6" textLength="137" lengthAdjust="spacingAndGlyphs" fill="#d9e8f5">DR. (Vaidya) MANA BAJRA BAJRACHARYA</text>
</g>
<path d="M23 66 h13 M36 60 v8" stroke="#4a93c8" stroke-width=".8"/>
<rect x="37" y="67.500" width="107.500" height="94" fill="#f3ece8"/>
<g filter="url(#b7)" opacity=".82">
<path d="M99 100 q-3 30 -8 61 h6 q2 -30 6 -58z" fill="#7a6a55"/>
<path d="M104 130 q8 6 12 18" stroke="#6a5a48" stroke-width="2" fill="none"/>
<ellipse cx="96" cy="100" rx="19" ry="17" fill="#5d7d62"/>
<ellipse cx="86" cy="112" rx="12" ry="9" fill="#7d9a7a"/>
<ellipse cx="104" cy="88" rx="11" ry="9" fill="#46664e"/>
<ellipse cx="112" cy="133" rx="16" ry="12" fill="#5a7a60"/>
<ellipse cx="103" cy="140" rx="9" ry="7" fill="#7f9b80"/>
<path d="M108 152 l12 -11 l12 11 z" fill="#e0a04a"/>
<rect x="111" y="151" width="19" height="12" fill="#cf6b32"/>
<ellipse cx="62" cy="158" rx="14" ry="5" fill="#b8b08a"/>
</g>
<g font-family="'Liberation Sans',sans-serif" font-weight="700" font-size="5.400" fill="#cfe3f4">
<text x="156" y="76.500" textLength="62" lengthAdjust="spacingAndGlyphs">This book mainly covers</text>
<text x="156" y="82.900" textLength="52" lengthAdjust="spacingAndGlyphs">about the Ayurvedic</text>
<text x="156" y="89.300" textLength="55" lengthAdjust="spacingAndGlyphs">concept, fundamental</text>
<text x="156" y="95.700" textLength="42" lengthAdjust="spacingAndGlyphs">concept, causes,</text>
<text x="156" y="102.100" textLength="58" lengthAdjust="spacingAndGlyphs">symptoms, prevention,</text>
<text x="156" y="108.500" textLength="53" lengthAdjust="spacingAndGlyphs">treatment, prohibited</text>
<text x="156" y="114.900" textLength="59" lengthAdjust="spacingAndGlyphs">foods and behaviors of</text>
<text x="156" y="121.300" textLength="21" lengthAdjust="spacingAndGlyphs">Arthritis,</text>
<text x="156" y="127.700" textLength="20" lengthAdjust="spacingAndGlyphs">Asthma,</text>
<text x="156" y="134.100" textLength="36" lengthAdjust="spacingAndGlyphs">Breast Cancer,</text>
<text x="156" y="140.500" textLength="22" lengthAdjust="spacingAndGlyphs">Diabetes,</text>
<text x="156" y="146.900" textLength="33" lengthAdjust="spacingAndGlyphs">Hemorrhoids,</text>
<text x="156" y="153.300" textLength="25" lengthAdjust="spacingAndGlyphs">Hay Fever,</text>
<text x="156" y="159.700" textLength="22" lengthAdjust="spacingAndGlyphs">Hepatitis,</text>
</g>
<rect x="176.500" y="14" width="74" height="39.500" fill="#0d2b49" stroke="#2c4764" stroke-width="1"/>
<text x="213.500" y="43.200" font-family="'Liberation Sans',sans-serif" font-size="27.500" fill="#fff" text-anchor="middle" textLength="48" lengthAdjust="spacingAndGlyphs" stroke="#fff" stroke-width=".9">PDF</text>
</svg></div>
    </div>
    <div class="abs card" style="left:881px;top:496px">
      <div class="img" id="im8"><svg width="252" height="161" viewBox="0 0 252 161">
<defs>
<filter id="b8" x="-30%" y="-30%" width="160%" height="160%"><feGaussianBlur stdDeviation="6"/></filter>
<filter id="b8s" x="-30%" y="-30%" width="160%" height="160%"><feGaussianBlur stdDeviation="1.300"/></filter>
<linearGradient id="sk8" x1="0" x2="1"><stop offset="0" stop-color="#f3dec9"/><stop offset=".45" stop-color="#f8e9d9"/><stop offset="1" stop-color="#fcf2e8"/></linearGradient>
<clipPath id="cl8"><circle cx="140" cy="112" r="36"/></clipPath>
</defs>
<rect width="252" height="161" fill="url(#sk8)"/>
<g filter="url(#b8)">
<ellipse cx="232" cy="118" rx="22" ry="18" fill="#e9b98f"/>
<ellipse cx="170" cy="28" rx="50" ry="12" fill="#efdcc6"/>
<ellipse cx="95" cy="50" rx="14" ry="36" fill="#ebd0b4"/>
<ellipse cx="240" cy="152" rx="16" ry="10" fill="#f3ece6"/>
</g>
<g filter="url(#b8s)">
<path d="M0 0 L68 0 Q78 20 86 40 Q84 60 78 76 Q70 110 58 161 L0 161 Z" fill="#3a2e25"/><path d="M0 0 L68 0 Q78 20 86 40 Q84 60 78 76 L0 76 Z" fill="#2c221a"/><path d="M20 80 Q40 110 44 161 M50 78 Q40 120 20 161 M0 100 Q20 120 30 161" stroke="#6a5a4c" stroke-width="2.500" fill="none"/>
<path d="M66 0 Q82 30 84 50 Q80 66 76 76" stroke="#8a6a48" stroke-width="3" fill="none"/>
<path d="M10 0 Q40 20 60 60" stroke="#4a3a2a" stroke-width="2" fill="none"/>
<path d="M0 30 Q30 40 50 76" stroke="#46362a" stroke-width="2" fill="none"/>
<path d="M66 0 L84 0 L92 20 L77 21 Z" fill="#d7303a"/>
<path d="M127 37 Q150 43 203 29 Q168 53 127 37 Z" fill="#2a2018"/><path d="M135 26 Q165 14 200 24" stroke="#e2c9ae" stroke-width="3" fill="none" opacity=".7"/>
<path d="M127 38 Q160 46 203 29.500" stroke="#2a2018" stroke-width="3" fill="none"/>
<ellipse cx="227" cy="113" rx="8" ry="5.500" fill="#2e170c"/><ellipse cx="216" cy="120" rx="8" ry="5" fill="#d99468" opacity=".6"/>
<ellipse cx="226" cy="116" rx="13" ry="8" fill="#c98256" opacity=".55"/>
</g>
<rect x="0" y="75" width="165" height="86" fill="#fff" opacity=".62"/>
<g clip-path="url(#cl8)">
<circle cx="140" cy="112" r="36" fill="#f5e4d8"/>
<path d="M127 75 L166 150 L190 150 L190 70 Z" fill="#e18f90"/>
<path d="M140 82 q12 12 14 30 q6 12 12 30" stroke="#d0696f" stroke-width="5" fill="none" opacity=".5" filter="url(#b8s)"/>
</g>
<g font-family="'Liberation Sans',sans-serif" font-weight="700" fill="#d42a3c">
<text x="7" y="106.300" font-size="16.500" textLength="64" lengthAdjust="spacingAndGlyphs">PRINCIPLES</text>
<text x="7" y="122.400" font-size="16.500" textLength="23" lengthAdjust="spacingAndGlyphs">AND</text>
<text x="7" y="139" font-size="16.500" textLength="108.500" lengthAdjust="spacingAndGlyphs">SHORT PRACTICE OF</text>
<text x="7" y="165" font-size="25" textLength="138" lengthAdjust="spacingAndGlyphs">COSMETIC CARE IN</text>
</g>
</svg></div>
    </div>

    <div class="abs" id="menu"><div style="top:11.200px">Light</div><div style="top:37.100px">Dark</div><div style="top:64px;letter-spacing:-.7px">System</div></div>
  </div></div>
  <div class="abs" id="taskbar"></div>
  <!--TASKBAR-ITEMS--><svg class="abs" style="left:0;top:680px" width="1280" height="40" viewBox="0 680 1280 40" fill="none" stroke-linecap="round" stroke-linejoin="round">
<defs>
<linearGradient id="wl" x1="0" y1="0" x2="1" y2="1"><stop offset="0" stop-color="#7fdcfb"/><stop offset="1" stop-color="#1a94e6"/></linearGradient>
<linearGradient id="eg" x1="0" y1="0" x2="1" y2="1"><stop offset="0" stop-color="#35c1f1"/><stop offset=".6" stop-color="#1b78d0"/><stop offset="1" stop-color="#0c4f9e"/></linearGradient>
</defs>
<!-- weather -->
<circle cx="25" cy="699" r="8.800" fill="#f5a623"/><circle cx="24" cy="698" r="6" fill="#f8c04a"/><ellipse cx="30" cy="704" rx="6.500" ry="3.600" fill="#dfe9f7"/><circle cx="28" cy="702" r="3" fill="#eef3fb"/>
<circle cx="33.300" cy="692" r="5.400" fill="#f28b94"/>
<!-- windows logo -->
<rect x="390" y="690" width="9.300" height="9.300" rx=".8" fill="url(#wl)"/><rect x="400.500" y="690" width="9.300" height="9.300" rx=".8" fill="url(#wl)"/><rect x="390" y="700.500" width="9.300" height="9.300" rx=".8" fill="url(#wl)"/><rect x="400.500" y="700.500" width="9.300" height="9.300" rx=".8" fill="url(#wl)"/>
<!-- search pill -->
<rect x="420.500" y="686" width="183" height="27.500" rx="13.750" fill="#2c3a60"/>
<circle cx="434.700" cy="698.800" r="4.300" stroke="#e8e8ee" stroke-width="1.400"/><path d="M437.800 702 l3.200 3.200" stroke="#e8e8ee" stroke-width="1.600"/>
<g><ellipse cx="586" cy="702" rx="14" ry="7.500" fill="#5f9fd8"/><ellipse cx="586" cy="703.500" rx="9" ry="3.600" fill="#e8604a"/><path d="M590 694 l2.500 8 h-5z" fill="#3a4a70"/><circle cx="590" cy="693.500" r="1.500" fill="#e8a070"/><circle cx="566" cy="701" r="3.600" fill="#d8283a"/><circle cx="571.500" cy="704" r="3.600" fill="#e03a48"/><path d="M564 696 l2 -5 l2 5 l3 -4 l0 6z" fill="#4a9a3a"/></g>
<!-- task view -->
<rect x="614" y="697" width="14" height="11.500" rx="1.500" fill="#8a8d96"/><rect x="618.500" y="690.500" width="15" height="12.500" rx="1.500" fill="#f2f2f4"/>
<!-- chat -->
<circle cx="660.500" cy="699.500" r="9.800" fill="#7b6fd0"/><path d="M652 706 l-1 4.500 l5 -2z" fill="#7b6fd0"/><circle cx="660.500" cy="699.500" r="7" fill="#a79cec" opacity=".55"/><rect x="655.500" y="696.500" width="7" height="6" rx="1.200" fill="#fff"/><path d="M663 699.500 l3 -2 v4z" fill="#fff"/>
<!-- explorer -->
<path d="M687 693 q0 -1.500 1.500 -1.500 h5 l2 2 h11 q1.500 0 1.500 1.500 v13 q0 1.500 -1.500 1.500 h-18 q-1.500 0 -1.500 -1.500z" fill="#f0b429"/><rect x="687" y="695.500" width="21" height="14" rx="1.500" fill="#fbd75b"/><rect x="691" y="703" width="13" height="6.500" fill="#2f8fe0"/><rect x="691" y="703" width="13" height="2.200" fill="#1f6fc0"/>
<!-- edge highlight -->
<rect x="719" y="683" width="30.500" height="34" rx="4" fill="#2e2f38"/>
<circle cx="734.500" cy="699" r="9.800" fill="url(#eg)"/><path d="M725 697 q2 -8 10 -8 q9 .5 9.500 9 q-1 4 -6 4 q-3 0 -3 -2 q2 -1 1.500 -3 q-1 -3 -5 -3 q-5 0 -7 3z" fill="#5fd06a"/><path d="M725 697 q2 -8 10 -8 q6 .3 8.500 5 q-4 -3 -9 -2 q-6 1 -9.500 5z" fill="#3fc8e8"/><circle cx="735.500" cy="701" r="3.300" fill="#0d3f86"/>
<rect x="727" y="713" width="13.500" height="3" rx="1.500" fill="#60b6ee"/>
<!-- store -->
<path d="M765.500 693.500 q0 -3.500 5 -3.500 q5 0 5 3.500" stroke="#3aa0e8" stroke-width="1.600"/><rect x="761" y="693" width="19" height="16.500" rx="2.500" fill="#f4f4f6"/><rect x="766.500" y="697" width="3.600" height="3.600" fill="#f25022"/><rect x="771" y="697" width="3.600" height="3.600" fill="#7fba00"/><rect x="766.500" y="701.500" width="3.600" height="3.600" fill="#00a4ef"/><rect x="771" y="701.500" width="3.600" height="3.600" fill="#ffb900"/>
<!-- mail -->
<path d="M797.500 697 l10 -6.500 l10 6.500 v11 q0 1 -1 1 h-18 q-1 0 -1 -1z" fill="#1687d8"/><path d="M799.500 696 h16 v8 h-16z" fill="#e8f4fd"/><path d="M797.500 697 l10 6.500 l10 -6.500 v11 q0 1 -1 1 h-18 q-1 0 -1 -1z" fill="#28a8f0"/><path d="M797.500 709 l10 -6.500 l10 6.500z" fill="#1c94e4"/>
<!-- word -->
<rect x="839" y="690" width="14.500" height="18" rx="1.500" fill="#2b7cd3"/><rect x="839" y="690" width="14.500" height="4.500" fill="#41a5ee"/><rect x="839" y="699" width="14.500" height="4.500" fill="#185abd"/><rect x="839" y="703.500" width="14.500" height="4.500" fill="#103f91"/><rect x="834" y="694" width="10.500" height="10.500" rx="1.200" fill="#185abd"/><path d="M836.300 696.800 l1.200 5 l1.500 -4.500 l1.500 4.500 l1.200 -5" stroke="#fff" stroke-width="1.100"/>
<rect x="840.500" y="713.300" width="6" height="2.600" rx="1.300" fill="#9a9aa0"/>
<!-- vscode -->
<path d="M885 692 L872 703.500 M885 708 L872 696.500" stroke="#2196e0" stroke-width="3.400" stroke-linecap="round"/><path d="M872 703.500 l-2.200 1.300 M872 696.500 l-2.200 -1.300" stroke="#1f8ad0" stroke-width="2.400" stroke-linecap="round"/><path d="M884.500 689.800 l6 2.700 v15 l-6 2.700z" fill="#33b1f5"/>
<rect x="878" y="713.300" width="6" height="2.600" rx="1.300" fill="#9a9aa0"/>
<!-- tray -->
<path d="M1085.500 702 l3.700 -3.700 l3.700 3.700" stroke="#f0f0f0" stroke-width="1.300"/>
<g stroke="#f0f0f0" stroke-width="1.200"><path d="M1145.500 697.500 q6.500 -5.500 13 0 M1147.700 700 q4.300 -3.600 8.600 0 M1149.900 702.500 q2.100 -1.800 4.200 0"/><circle cx="1152" cy="704.300" r=".7" fill="#f0f0f0"/></g>
<g stroke="#f0f0f0" stroke-width="1.100"><path d="M1165.500 698 h2.300 l3 -2.600 v9.200 l-3 -2.600 h-2.300z"/><path d="M1172.800 697.500 q1.600 2.500 0 5 M1174.800 695.800 q2.800 4.200 0 8.400"/></g>
<rect x="1185" y="696" width="12" height="8" rx="1.800" stroke="#f0f0f0" stroke-width="1.100"/><rect x="1186.500" y="697.500" width="4.500" height="5" rx=".6" fill="#f0f0f0"/><path d="M1198.300 698.800 v2.400" stroke="#f0f0f0" stroke-width="1.300"/>
</svg>
<div class="abs tb" style="left:30.300px;top:686.500px;width:6px;text-align:center;font-size:8.500px;color:#222;font-weight:700">1</div>
<div class="abs tb" style="left:42.500px;top:687px;font-size:10.600px;letter-spacing:-.5px">28°C</div>
<div class="abs tb" style="left:42.500px;top:700.500px;font-size:10.600px">Mostly sunny</div>
<div class="abs tb" style="left:451px;top:693px;font-size:11.500px;color:#f0f0f4;letter-spacing:-.25px">Search</div>
<div class="abs tb" style="left:1100px;top:688px;width:42px;text-align:center;font-size:9.800px">ENG</div>
<div class="abs tb" style="left:1100px;top:701px;width:42px;text-align:center;font-size:9.800px">IN</div>
<div class="abs tb" style="left:1200px;top:687.300px;width:63.500px;text-align:right;font-size:10.400px;letter-spacing:-.35px">18:14</div>
<div class="abs tb" style="left:1200px;top:700.200px;width:63.500px;text-align:right;font-size:10.400px">06-11-2023</div><!--/TASKBAR-ITEMS-->
</div>
</body>
</html>
